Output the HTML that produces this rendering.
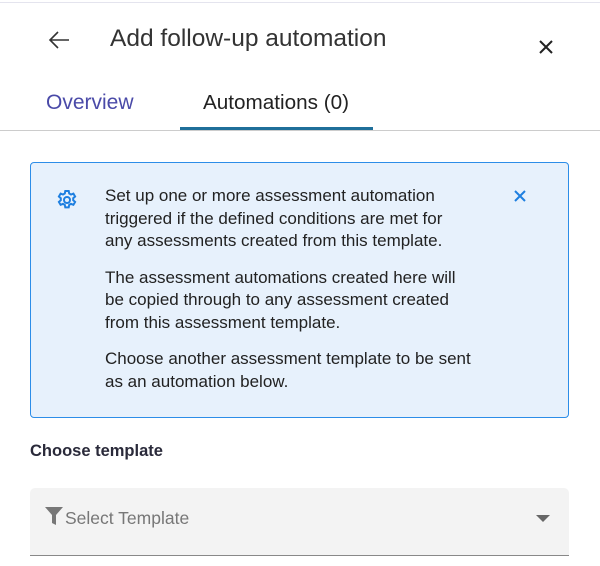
<!DOCTYPE html>
<html><head><style>
body{margin:0;width:600px;height:566px;background:#fff;font-family:"Liberation Sans",sans-serif;position:relative;overflow:hidden}
.a{position:absolute}
</style></head><body>
<div class="a" style="left:0;top:2px;width:600px;height:1px;background:#e4e4ee"></div>
<svg class="a" style="left:47px;top:30px" width="24" height="20" viewBox="0 0 24 20"><path d="M22 10H3M11 2L3 10l8 8" fill="none" stroke="#333" stroke-width="1.6"/></svg>
<div class="a" style="left:110px;top:25px;font-size:24.5px;color:#333">Add follow-up automation</div>
<svg class="a" style="left:538px;top:39px" width="16" height="16" viewBox="0 0 16 16"><path d="M2 2L14 14M14 2L2 14" stroke="#222" stroke-width="2"/></svg>
<div class="a" style="left:46px;top:91px;font-size:21px;color:#4a4aa8">Overview</div>
<div class="a" style="left:203px;top:91px;font-size:20.7px;color:#222">Automations (0)</div>
<div class="a" style="left:0;top:130px;width:600px;height:1px;background:#ccc"></div>
<div class="a" style="left:180px;top:127px;width:193px;height:3px;background:#1f6f9a"></div>
<div class="a" style="left:30px;top:162px;width:537px;height:254px;background:#e7f1fc;border:1px solid #2c8de8;border-radius:4px"></div>
<svg class="a" style="left:55px;top:188px" width="24" height="24" viewBox="0 0 24 24"><g fill="none" stroke="#1e7fe0" stroke-width="2"><path d="M10.3 3h3.4l.5 2.5 1.8 1 2.4-.9 1.7 2.9-1.9 1.7v2l1.9 1.7-1.7 2.9-2.4-.9-1.8 1-.5 2.5h-3.4l-.5-2.5-1.8-1-2.4.9-1.7-2.9 1.9-1.7v-2L3.9 8.5l1.7-2.9 2.4.9 1.8-1z"/><circle cx="12" cy="12" r="3"/></g></svg>
<div class="a" style="left:105px;top:185px;font-size:17px;line-height:22.5px;color:#222;width:369px">Set up one or more assessment automation triggered if the defined conditions are met for any assessments created from this template.<div style="height:14px"></div>The assessment automations created here will be copied through to any assessment created from this assessment template.<div style="height:14px"></div>Choose another assessment template to be sent as an automation below.</div>
<svg class="a" style="left:513px;top:189px" width="14" height="14" viewBox="0 0 14 14"><path d="M2 2L12 12M12 2L2 12" stroke="#1e7fe0" stroke-width="2"/></svg>
<div class="a" style="left:30px;top:442px;font-size:16.5px;font-weight:bold;color:#2a2a3a">Choose template</div>
<div class="a" style="left:30px;top:488px;width:539px;height:67px;background:#f3f3f3;border-radius:5px 5px 0 0;border-bottom:1px solid #888"></div>
<svg class="a" style="left:44px;top:506px" width="20" height="20" viewBox="0 0 20 20"><path d="M1 1h18l-7 8v10l-4-2V9z" fill="#777"/></svg>
<div class="a" style="left:65px;top:508px;font-size:17.5px;color:#777">Select Template</div>
<svg class="a" style="left:536px;top:515px" width="14" height="8"><path d="M0 0h14L7 7z" fill="#666"/></svg>
</body></html>
